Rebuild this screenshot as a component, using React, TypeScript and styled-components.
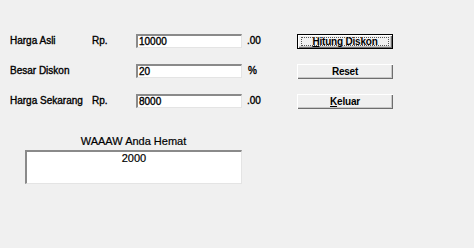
import React from "react";
import styled, { createGlobalStyle } from "styled-components";

const Global = createGlobalStyle`
  html, body { margin: 0; padding: 0; background: #f0f0f0; }
  body { width: 474px; height: 248px; overflow: hidden; font-family: "Liberation Sans", Arial, sans-serif; }
`;

const Page = styled.div`
  width: 474px;
  height: 248px;
  box-sizing: border-box;
  padding: 34px 0 0 10px;
  background: #f0f0f0;
  color: #000;
`;

const Form = styled.div`
  display: grid;
  grid-template-columns: 82px 44px 106px 55px 96px;
  grid-auto-rows: 15px;
  row-gap: 15px;
  align-items: start;
`;

const Label = styled.span`
  font-size: 10px;
  font-weight: 400;
  -webkit-text-stroke: 0.35px #000;
  white-space: nowrap;
  line-height: 14px;
`;

const Field = styled.div`
  height: 14px;
  box-sizing: border-box;
  background: #fff;
  border-top: 2px solid #8a8a8a;
  border-left: 2px solid #8a8a8a;
  border-right: 1px solid #e4e4e4;
  border-bottom: 1px solid #e4e4e4;
  font-size: 10px;
  line-height: 11px;
  padding-left: 1px;
  -webkit-text-stroke: 0.35px #000;
`;

const Suffix = styled(Label)<{ $pad?: number }>`
  padding-left: ${(p) => p.$pad ?? 5}px;
`;

const Button = styled.div<{ $default?: boolean }>`
  height: 15px;
  box-sizing: border-box;
  display: flex;
  align-items: center;
  justify-content: center;
  font-size: 10px;
  font-weight: 700;
  letter-spacing: -0.2px;
  position: relative;
  background: #f0f0f0;
  border: ${(p) => (p.$default ? "1px solid #000" : "none")};
  box-shadow: inset 1px 1px #fff, inset -1px -1px #6e6e6e, inset -2px -2px #c8c8c8;
  u { text-decoration: underline; }
  ${(p) =>
    p.$default &&
    `&::after {
      content: "";
      position: absolute;
      inset: 2px 3px;
      border: 1px dotted #555;
    }`}
`;

const Result = styled.div`
  margin: 26px 0 0 15px;
  width: 217px;
  display: flex;
  flex-direction: column;
  align-items: center;
`;

const Title = styled.div`
  font-size: 11px;
  line-height: 13px;
  height: 15px;
  -webkit-text-stroke: 0.2px #000;
`;

const Box = styled.div`
  width: 100%;
  height: 34px;
  box-sizing: border-box;
  background: #fff;
  border-top: 2px solid #8a8a8a;
  border-left: 2px solid #8a8a8a;
  border-right: 1px solid #e4e4e4;
  border-bottom: 1px solid #e4e4e4;
  text-align: center;
  font-size: 11px;
  line-height: 13px;
  -webkit-text-stroke: 0.2px #000;
`;

export default function App() {
  return (
    <>
      <Global />
      <Page>
        <Form>
          <Label>Harga Asli</Label>
          <Label>Rp.</Label>
          <Field>10000</Field>
          <Suffix>.00</Suffix>
          <Button $default>
            <span><u>H</u>itung Diskon</span>
          </Button>

          <Label>Besar Diskon</Label>
          <span />
          <Field>20</Field>
          <Suffix $pad={6}>%</Suffix>
          <Button>Reset</Button>

          <Label>Harga Sekarang</Label>
          <Label>Rp.</Label>
          <Field>8000</Field>
          <Suffix>.00</Suffix>
          <Button>
            <span><u>K</u>eluar</span>
          </Button>
        </Form>
        <Result>
          <Title>WAAAW Anda Hemat</Title>
          <Box>2000</Box>
        </Result>
      </Page>
    </>
  );
}
